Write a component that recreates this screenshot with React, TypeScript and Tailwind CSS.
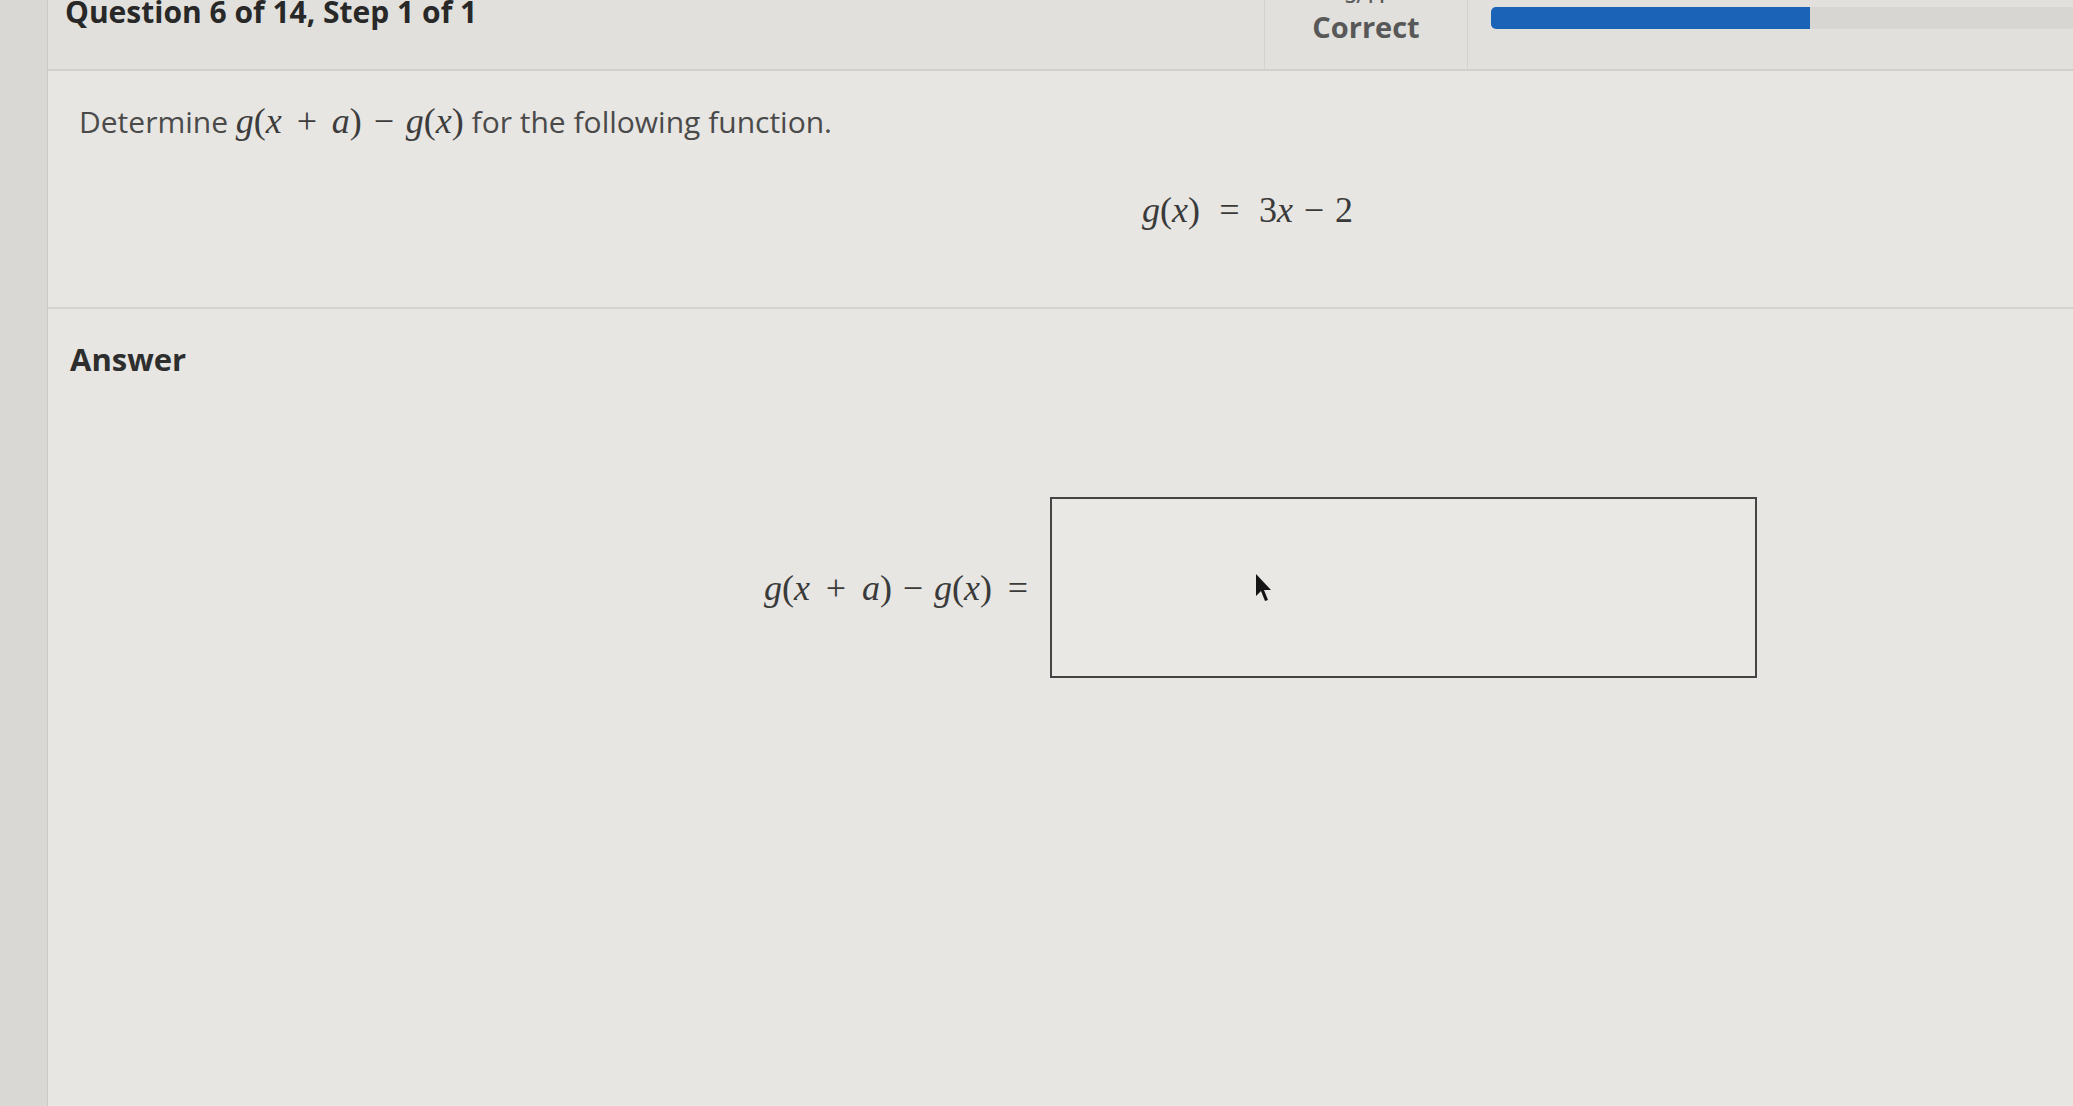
import type { ReactNode } from "react";

// italic math variable
function V({ children }: { children: ReactNode }) {
  return <span className="italic">{children}</span>;
}

// binary operator / relation with its own spacing box
function Op({ children, w }: { children: ReactNode; w: string }) {
  return <span className={`inline-block ${w}`}>{children}</span>;
}

export default function App() {
  return (
    <div className="flex h-[1106px] w-full overflow-hidden bg-[#e7e6e2] font-['Open_Sans',sans-serif]">
      {/* left rail */}
      <div className="w-[48px] shrink-0 border-r border-[#c9c8c4] bg-[#d9d8d4]" />

      <main className="flex min-w-0 flex-1 flex-col">
        {/* Top bar */}
        <header className="flex h-[71px] shrink-0 border-b-2 border-[#d1d0cc] bg-[#e1e0dc]">
          <div className="w-[1216px] shrink-0 pl-[17px]">
            <h1 className="-mt-[2px] text-[30px] font-bold leading-[28px] text-[#282828]">
              Question 6 of 14, Step 1 of 1
            </h1>
          </div>
          <div className="flex w-[203px] shrink-0 flex-col items-center border-l border-[#d3d2ce]">
            <span className="-mt-[14px] text-[20px] font-semibold leading-[20px] text-[#5c5c5c]">3/11</span>
            <span className="mt-[6px] text-[29px] font-bold leading-[30px] text-[#585858]">Correct</span>
          </div>
          <div className="flex min-w-0 flex-1 border-l border-[#d3d2ce] pl-[23px] pt-[7px]">
            <div className="flex h-[22px] flex-1 overflow-hidden rounded-l-[5px]">
              <div className="w-[319px] bg-[#1b63b7]" />
              <div className="flex-1 bg-[#d7d6d2]" />
            </div>
          </div>
        </header>

        {/* Question */}
        <section className="h-[238px] shrink-0 border-b-2 border-[#d3d2ce] pl-[31px] pt-[32px]">
          <p className="whitespace-nowrap text-[30px] leading-[36px] text-[#4a4a4a]">
            Determine{" "}
            <span className="font-['Liberation_Serif',serif] text-[36px] text-[#3c3c3c]">
              <V>g</V>(<V>x</V>
              <Op w="w-[50px] text-center">+</Op>
              <V>a</V>)<Op w="w-[44px] text-center">−</Op>
              <V>g</V>(<V>x</V>)
            </span>{" "}
            for the following function.
          </p>
          <div className="mt-[50px] whitespace-nowrap pl-[1063px] font-['Liberation_Serif',serif] text-[36px] leading-[40px] text-[#3a3a3a]">
            <V>g</V>(<V>x</V>)<Op w="w-[59px] text-center">=</Op>3<V>x</V>
            <Op w="w-[42px] text-center">−</Op>2
          </div>
        </section>

        {/* Answer */}
        <section className="flex-1 pl-[22px] pt-[32px]">
          <h2 className="text-[31px] font-bold leading-[36px] text-[#2e2e2e]">Answer</h2>

          <div className="mt-[120px] flex items-center pl-[678px]">
            <div className="flex w-[280px] justify-end font-['Liberation_Serif',serif] text-[36px] leading-[40px] text-[#3a3a3a]">
              <span className="whitespace-nowrap">
                <V>g</V>(<V>x</V>
                <Op w="w-[52px] text-center">+</Op>
                <V>a</V>)<Op w="w-[42px] text-center">−</Op>
                <V>g</V>(<V>x</V>)<Op w="w-[36px] text-right">=</Op>
              </span>
            </div>
            <div className="relative ml-[22px] h-[181px] w-[707px] border-2 border-[#444444] bg-[#e9e8e4]">
              {/* mouse pointer caught in the shot */}
              <svg
                className="absolute left-[203px] top-[74px]"
                width="18"
                height="30"
                viewBox="0 0 18 30"
              >
                <path d="M1 1 L1 23 L6 18 L10 28 L13 27 L9 17 L16 17 Z" fill="#151515" />
              </svg>
            </div>
          </div>
        </section>
      </main>
    </div>
  );
}
